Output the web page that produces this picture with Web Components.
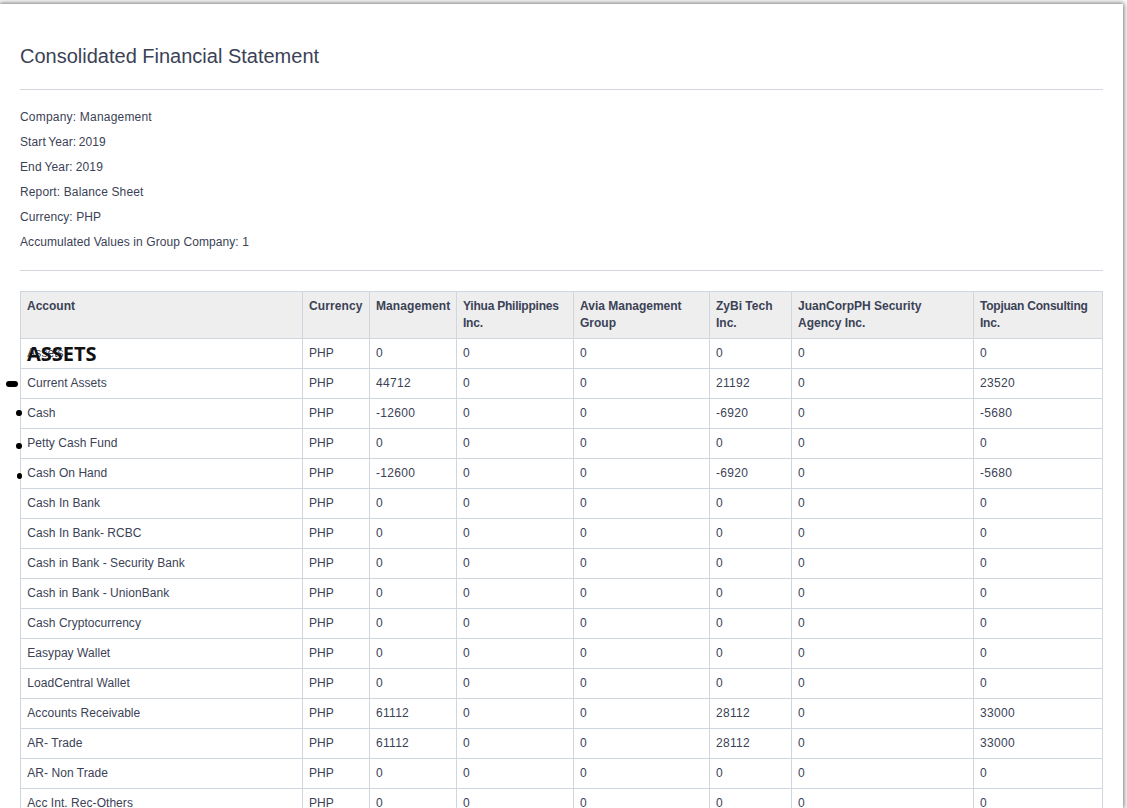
<!DOCTYPE html>
<html lang="en"><head><meta charset="utf-8"><title>Consolidated Financial Statement</title>
<style>
html,body{margin:0;height:808px;overflow:hidden;background:#fff}
body{font-family:"Liberation Sans",Arial,sans-serif;color:#3b4256}
</style></head><body>
<statement-page>
  <span slot="title">Consolidated Financial Statement</span>
  <meta-line style="letter-spacing:.2px">Company: Management</meta-line>
  <meta-line style="letter-spacing:.1px;word-spacing:-.9px">Start Year: 2019</meta-line>
  <meta-line style="letter-spacing:.12px;word-spacing:-.4px">End Year: 2019</meta-line>
  <meta-line style="letter-spacing:.13px">Report: Balance Sheet</meta-line>
  <meta-line style="letter-spacing:.08px">Currency: PHP</meta-line>
  <meta-line style="letter-spacing:.08px">Accumulated Values in Group Company: 1</meta-line>
  <statement-table slot="table"></statement-table>
</statement-page>
<script>
class StatementPage extends HTMLElement{
  constructor(){super();this.attachShadow({mode:'open'}).innerHTML=`<style>
  :host{display:block;height:804px;margin:4px 4px 0 0;background:#fff;box-shadow:0 0 5px 1px rgba(0,0,0,.55);box-sizing:border-box;padding:0 20px;overflow:hidden}
  h1{margin:0;padding:40px 0 21px;font:400 20px/24px "Liberation Sans",Arial,sans-serif;color:#3b4256;border-bottom:1px solid #d3d7de}
  .meta{padding:15px 0 15px;border-bottom:1px solid #d3d7de}
  .table{padding-top:20px}
  </style><h1><slot name="title"></slot></h1><div class="meta"><slot></slot></div><div class="table"><slot name="table"></slot></div>`;}
}
class MetaLine extends HTMLElement{
  constructor(){super();this.attachShadow({mode:'open'}).innerHTML=`<style>
  :host{display:block;font:12px/25px "Liberation Sans",Arial,sans-serif;color:#3b4256}
  </style><slot></slot>`;}
}
const cols=[282,67,87,117,136,82,182,129];
const heads=[['Account',0],['Currency',.1],['Management',.1],['Yihua Philippines Inc.',-.23],['Avia Management Group',0],['ZyBi Tech Inc.',0],['JuanCorpPH Security Agency Inc.',0],['Topjuan Consulting Inc.',-.23]];
const rows=[['Assets',0,0,0],['Current Assets',44712,21192,23520],['Cash',-12600,-6920,-5680],['Petty Cash Fund',0,0,0],['Cash On Hand',-12600,-6920,-5680],['Cash In Bank',0,0,0],['Cash In Bank- RCBC',0,0,0],['Cash in Bank - Security Bank',0,0,0],['Cash in Bank - UnionBank',0,0,0],['Cash Cryptocurrency',0,0,0],['Easypay Wallet',0,0,0],['LoadCentral Wallet',0,0,0],['Accounts Receivable',61112,28112,33000],['AR- Trade',61112,28112,33000],['AR- Non Trade',0,0,0],['Acc Int. Rec-Others',0,0,0]];
const n=v=>`<td class="n">${v}</td>`;
class StatementTable extends HTMLElement{
  constructor(){super();
    const body=rows.map(r=>`<tr><td class="a">${r[0]}</td><td>PHP</td>${n(r[1])}${n(0)}${n(0)}${n(r[2])}${n(0)}${n(r[3])}</tr>`).join('');
    this.attachShadow({mode:'open'}).innerHTML=`<style>
    :host{display:block;position:relative;font:12px/17px "Liberation Sans",Arial,sans-serif;color:#3b4256}
    table{border-collapse:collapse;table-layout:fixed;width:1082px}
    th,td{border:1px solid #cfd6de;padding:6px;text-align:left;vertical-align:top;overflow:hidden}
    th{background:#eee;font-weight:700;height:33px}
    td{height:17px}
    .a{padding-left:6.3px;letter-spacing:.05px}
    .n{letter-spacing:.3px}
    .assets{position:absolute;left:7px;top:51px;font:700 20px/24px "Open Sans",sans-serif;color:#111;margin:0}
    .b{position:absolute;background:#000;border-radius:50%;width:5.5px;height:6px}
    .dash{position:absolute;background:#000;border-radius:3px;width:12px;height:6px;left:-14px;top:90px}
    </style><table><colgroup>${cols.map(c=>`<col style="width:${c}px">`).join('')}</colgroup><thead><tr>${heads.map(h=>`<th style="letter-spacing:${h[1]}px">${h[0]}</th>`).join('')}</tr></thead><tbody>${body}</tbody></table>
    <div class="assets">ASSETS</div><i class="dash"></i>
    <i class="b" style="left:-4px;top:118.5px"></i><i class="b" style="left:-4px;top:152px"></i><i class="b" style="left:-3.2px;top:182px"></i>`;}
}
customElements.define('statement-page',StatementPage);
customElements.define('meta-line',MetaLine);
customElements.define('statement-table',StatementTable);
</script>
</body></html>
